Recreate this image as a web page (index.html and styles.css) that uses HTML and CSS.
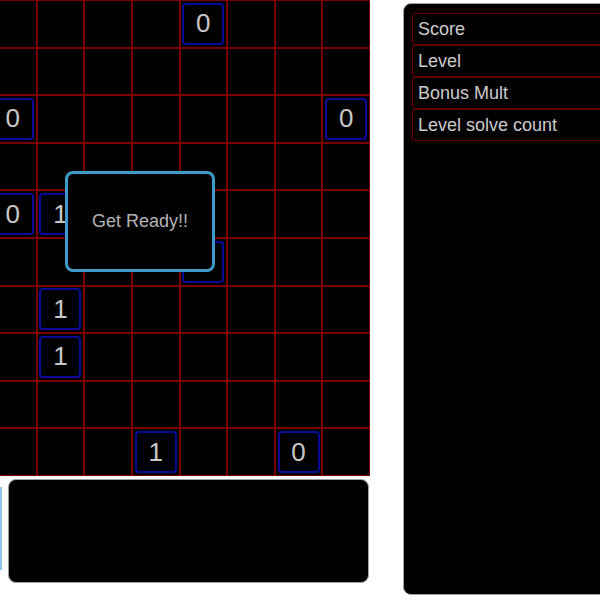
FILE: index.html
```html
<!DOCTYPE html>
<html>
<head>
<meta charset="utf-8">
<link rel="stylesheet" href="styles.css">
</head>
<body>
<div class="app">
  <div class="left">
    <div class="board">
      <div class="cell"></div><div class="cell"></div><div class="cell"></div><div class="cell"></div><div class="cell"><span class="tile">0</span></div><div class="cell"></div><div class="cell"></div><div class="cell"></div>
      <div class="cell"></div><div class="cell"></div><div class="cell"></div><div class="cell"></div><div class="cell"></div><div class="cell"></div><div class="cell"></div><div class="cell"></div>
      <div class="cell"><span class="tile">0</span></div><div class="cell"></div><div class="cell"></div><div class="cell"></div><div class="cell"></div><div class="cell"></div><div class="cell"></div><div class="cell"><span class="tile">0</span></div>
      <div class="cell"></div><div class="cell"></div><div class="cell"></div><div class="cell"></div><div class="cell"></div><div class="cell"></div><div class="cell"></div><div class="cell"></div>
      <div class="cell"><span class="tile">0</span></div><div class="cell"><span class="tile">1</span></div><div class="cell"></div><div class="cell"></div><div class="cell"></div><div class="cell"></div><div class="cell"></div><div class="cell"></div>
      <div class="cell"></div><div class="cell"></div><div class="cell"></div><div class="cell"></div><div class="cell"><span class="tile">0</span></div><div class="cell"></div><div class="cell"></div><div class="cell"></div>
      <div class="cell"></div><div class="cell"><span class="tile">1</span></div><div class="cell"></div><div class="cell"></div><div class="cell"></div><div class="cell"></div><div class="cell"></div><div class="cell"></div>
      <div class="cell"></div><div class="cell"><span class="tile">1</span></div><div class="cell"></div><div class="cell"></div><div class="cell"></div><div class="cell"></div><div class="cell"></div><div class="cell"></div>
      <div class="cell"></div><div class="cell"></div><div class="cell"></div><div class="cell"></div><div class="cell"></div><div class="cell"></div><div class="cell"></div><div class="cell"></div>
      <div class="cell"></div><div class="cell"></div><div class="cell"></div><div class="cell"><span class="tile">1</span></div><div class="cell"></div><div class="cell"></div><div class="cell"><span class="tile">0</span></div><div class="cell"></div>
    </div>
    <div class="popup">Get Ready!!</div>
    <div class="bottom">
      <div class="strip"></div>
      <div class="console"></div>
    </div>
  </div>
  <div class="panel">
    <div class="stats">
      <div class="stat">Score</div>
      <div class="stat">Level</div>
      <div class="stat">Bonus Mult</div>
      <div class="stat">Level solve count</div>
    </div>
  </div>
</div>
</body>
</html>
```
FILE: styles.css
```css
html, body {
  margin: 0;
  padding: 0;
  overflow: hidden;
  background: #ffffff;
  font-family: "Liberation Sans", Arial, sans-serif;
}

.app {
  display: flex;
  align-items: flex-start;
  width: 900px;
}

.left {
  position: relative;
  width: 370px;
  flex: none;
}

.board {
  margin-left: -11px;
  width: 381px;
  display: grid;
  grid-template-columns: repeat(8, 47.625px);
  grid-template-rows: repeat(10, 47.6px);
  background: #000;
}

.cell {
  box-sizing: border-box;
  border: 1px solid #7a0000;
  display: flex;
  align-items: center;
  justify-content: center;
}

.tile {
  box-sizing: border-box;
  width: 42px;
  height: 42px;
  border: 2px solid #0a0a9a;
  border-radius: 4px;
  background: #000;
  color: #c8c8c8;
  font-size: 26px;
  display: flex;
  align-items: center;
  justify-content: center;
}

.popup {
  position: absolute;
  left: 65px;
  top: 171px;
  box-sizing: border-box;
  width: 150px;
  height: 101px;
  border: 3px solid #3d9bc9;
  border-radius: 8px;
  background: #000;
  color: #b4b4b4;
  font-size: 18px;
  display: flex;
  align-items: center;
  justify-content: center;
}

.bottom {
  display: flex;
  align-items: flex-start;
  gap: 6px;
  margin-top: 3px;
}

.strip {
  width: 2px;
  height: 83px;
  margin-top: 8px;
  background: #8cc4e4;
}

.console {
  box-sizing: border-box;
  width: 361px;
  height: 104px;
  border: 1px solid #a0a0a0;
  border-radius: 8px;
  background: #000;
}

.panel {
  box-sizing: border-box;
  margin-left: 33px;
  margin-top: 3px;
  width: 300px;
  height: 592px;
  border: 1px solid #a0a0a0;
  border-radius: 8px;
  background: #000;
  padding: 9px 8px;
}

.stats {
  display: flex;
  flex-direction: column;
}

.stat {
  border: 1px solid #700000;
  border-radius: 3px;
  line-height: 30px;
  padding: 0 5px;
  color: #cccccc;
  font-size: 18px;
}
```
